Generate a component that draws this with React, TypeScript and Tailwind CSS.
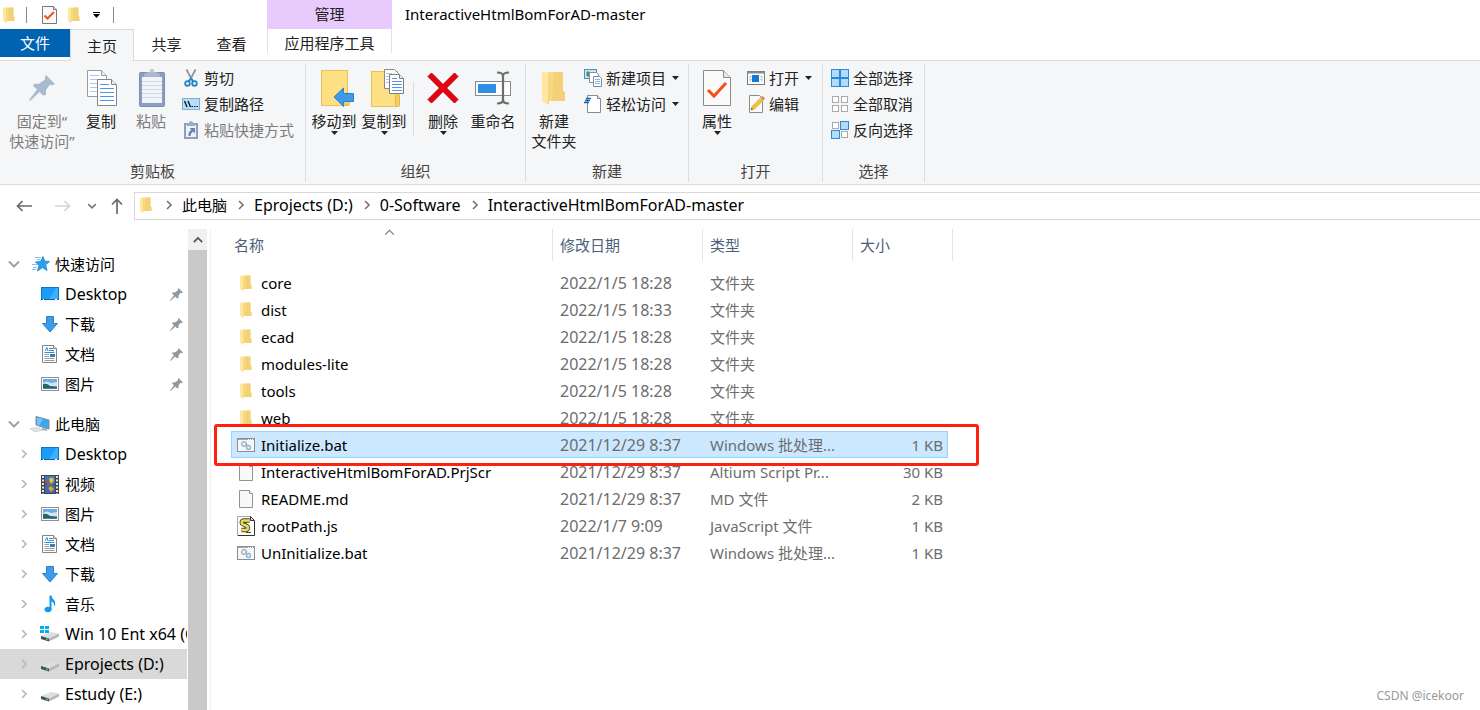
// src/App.tsx
import React, { useState } from 'react';

type IconProps = { className?: string };

/* ---------- icons ---------- */

const FolderIcon: React.FC<IconProps> = ({ className = 'w-3 h-4' }) => (
  <svg viewBox="0 0 24 34" preserveAspectRatio="none" className={className}>
    <path d="M5 1H21V20L23 21V30H6Z" fill="#f8d982" />
    <path d="M12 1H21V20L23 21V30H10Z" fill="#f0cb6c" opacity="0.6" />
    <path d="M0 0.500L7 3V24L6 34L0 30Z" fill="#ffe7a0" />
    <path d="M7 4V25L6 33" fill="none" stroke="#f0cc74" strokeWidth="1" />
  </svg>
);

const PinIcon: React.FC<IconProps> = ({ className = 'w-[26px] h-[26px] text-[#a9b9d0]' }) => (
  <svg viewBox="0 0 26 26" className={className}>
    <path
      d="M17 0L26 9L23 10.500L21 9.500L17 15V20L14 20.500L10.500 17L1 26L0 25L8 14.500L4 11L5.500 8.500L9.500 9L16 4.500V2Z"
      fill="currentColor"
    />
  </svg>
);

const CopyIcon: React.FC = () => (
  <svg viewBox="-2 0 32 36" className="w-8 h-9">
    <path d="M0.500 0.500H14.500L19.500 5.500V26.500H0.500Z" fill="#fff" stroke="#9a9a9a" />
    <path d="M14.500 0.500V5.500H19.500" fill="#eee" stroke="#9a9a9a" />
    <path d="M3 5.500H12M3 9.500H17M3 13.500H17M3 17.500H17M3 21.500H17" stroke="#a6c8f5" />
    <path d="M10.500 9.500H24.500L29.500 14.500V35.500H10.500Z" fill="#fff" stroke="#858585" />
    <path d="M24.500 9.500V14.500H29.500" fill="#eee" stroke="#858585" />
    <path d="M13 14.500H22M13 18.500H27M13 22.500H27M13 26.500H27M13 30.500H27" stroke="#4d94f0" />
  </svg>
);

const PasteIcon: React.FC = () => (
  <svg viewBox="-2 0 28 38" className="w-7 h-[38px]">
    <rect x="0.5" y="3.5" width="25" height="34" rx="1" fill="#8b9dc0" stroke="#7d8fb4" />
    <rect x="3" y="8" width="20" height="26" fill="#f1f5fa" />
    <path d="M3 12.500H23M3 16.500H23M3 20.500H23M3 24.500H23M3 28.500H23" stroke="#cfd9e6" />
    <path d="M5 8V5L9 3H11Q11 0 13 0Q15 0 15 3H17L21 5V8Z" fill="#a9b6cd" />
    <circle cx="13" cy="2.500" r="1" fill="#e5eaf2" />
  </svg>
);

const ScissorsIcon: React.FC = () => (
  <svg viewBox="0 0 14 18" className="w-[14px] h-[18px]">
    <path d="M2.500 0.500L8.500 12M11.500 0.500L5.500 12" stroke="#8f979d" strokeWidth="1.800" />
    <circle cx="3.500" cy="14.500" r="2.300" fill="none" stroke="#1e84c6" strokeWidth="1.800" />
    <circle cx="10.500" cy="14.500" r="2.300" fill="none" stroke="#1e84c6" strokeWidth="1.800" />
    <path d="M4.500 12L7 9.500L9.500 12" fill="none" stroke="#1e84c6" strokeWidth="1.600" />
  </svg>
);

const CopyPathIcon: React.FC = () => (
  <svg viewBox="0 0 18 12" className="w-[18px] h-3">
    <rect x="0.500" y="0.500" width="17" height="11" fill="#b5defa" stroke="#7eaed0" />
    <path d="M2.500 3L5 9M6 3L8.500 9" stroke="#111" strokeWidth="1.300" />
    <path d="M9.500 8.500H11M12 8.500H13.500M14.500 8.500H16" stroke="#111" />
  </svg>
);

const PasteShortcutIcon: React.FC = () => (
  <svg viewBox="0 0 14 18" className="w-[14px] h-[18px]">
    <rect x="1" y="3" width="12" height="14" fill="#eef2f7" stroke="#8d9fbf" strokeWidth="2" />
    <path d="M3 5V3L5 2Q5 0 7 0Q9 0 9 2L11 3V5Z" fill="#9aaac6" />
    <path d="M5.500 7H11V12.500L9 10.500Q6.500 12 6.500 15H4.500Q4 11 7.300 8.800Z" fill="#6c84ad" />
  </svg>
);

const MoveToIcon: React.FC = () => (
  <svg viewBox="-7 0 40 37" className="w-10 h-[37px]">
    <rect x="0.500" y="0.500" width="26" height="35" fill="#fde083" stroke="#e8c353" />
    <path d="M24 35V25Q26 21 28.500 24V35Z" fill="#f5cf64" stroke="#e3ba4a" />
    <path d="M13 27L22.500 18V23.500H32.500V31.500H22.500V36.500Z" fill="#3d9be9" stroke="#2a82cf" />
  </svg>
);

const CopyToIcon: React.FC = () => (
  <svg viewBox="-7 0 40 38" className="w-10 h-[38px]">
    <rect x="0.500" y="2.500" width="26" height="35" fill="#fde083" stroke="#e8c353" />
    <path d="M24.500 37V27Q26.500 23 28.500 26V37Z" fill="#f5cf64" stroke="#e3ba4a" />
    <path d="M13.500 0.500H23.500L27.500 4.500V19.500H13.500Z" fill="#fff" stroke="#8b8b8b" />
    <path d="M15 4.500H21M15 7.500H20M15 10.500H20M15 13.500H20" stroke="#a6c8f5" />
    <path d="M18.500 5.500H28.500L32.500 9.500V24.500H18.500Z" fill="#fff" stroke="#7d7d7d" />
    <path d="M28.500 5.500V9.500H32.500" fill="#eee" stroke="#7d7d7d" />
    <path d="M21 9.500H26M21 12.500H31M21 15.500H31M21 18.500H31M21 21.500H31" stroke="#4d94f0" />
  </svg>
);

const DeleteIcon: React.FC = () => (
  <svg viewBox="0 0 32 32" className="w-8 h-8">
    <path
      d="M4.500 1L16 12.500L27.500 1L31 4.500L19.500 16L31 27.500L27.500 31L16 19.500L4.500 31L1 27.500L12.500 16L1 4.500Z"
      fill="#e60012"
      stroke="#b3000d"
    />
  </svg>
);

const RenameIcon: React.FC = () => (
  <svg viewBox="0 0 36 34" className="w-9 h-[34px]">
    <rect x="0.500" y="10.500" width="35" height="14" fill="#fff" stroke="#8a8a8a" />
    <rect x="3" y="13" width="18" height="9" fill="#2f8fe5" />
    <path
      d="M22 1.500Q28 1.500 28 5V29Q28 32.500 22 32.500M34 1.500Q28 1.500 28 5M28 29Q28 32.500 34 32.500"
      fill="none"
      stroke="#6d6d6d"
      strokeWidth="2.200"
    />
  </svg>
);

const NewItemIcon: React.FC = () => (
  <svg viewBox="0 0 18 18" className="w-[18px] h-[18px]">
    <rect x="0.500" y="0.500" width="12" height="9" fill="#cfe8f8" stroke="#4f8fb5" />
    <rect x="2.500" y="2.500" width="3" height="5" fill="#3f8f7b" />
    <path d="M5.500 3.500H12.500L14.500 5.500V13.500H5.500Z" fill="#fff" stroke="#8e8e8e" />
    <path d="M9.500 7.500H15.500L17.500 9.500V17.500H9.500Z" fill="#fff" stroke="#7d8ea0" />
    <path d="M11 10.500H16M11 12.500H16M11 14.500H16" stroke="#86b7ec" />
  </svg>
);

const EasyAccessIcon: React.FC = () => (
  <svg viewBox="0 0 18 18" className="w-[18px] h-[18px]">
    <path d="M3.500 0.500H13.500L16.500 3.500V17.500H3.500Z" fill="#fff" stroke="#8a8a8a" />
    <path d="M13.500 0.500V3.500H16.500" fill="#eee" stroke="#8a8a8a" />
    <path d="M2 3.500H7M1 5.500H6M0 7.500H5" stroke="#1667b0" strokeWidth="1.400" />
  </svg>
);

const PropertiesIcon: React.FC<IconProps> = ({ className = 'w-7 h-9' }) => (
  <svg viewBox="0 0 28 36" className={className}>
    <path d="M0.500 0.500H20.500L27.500 7.500V35.500H0.500Z" fill="#fafafa" stroke="#8a8a8a" />
    <path d="M20.500 0.500V7.500H27.500" fill="#e6e6e6" stroke="#8a8a8a" />
    <path d="M5 20L11 26L23 13" fill="none" stroke="#f1511b" strokeWidth="3" />
  </svg>
);

// Same sheet with heavier lines, for the title bar
const SmallPropertiesIcon: React.FC = () => (
  <svg viewBox="0 0 15 18" className="w-[15px] h-[18px]">
    <path d="M0.500 0.500H11.500L14.500 3.500V17.500H0.500Z" fill="#fafafa" stroke="#7a7a7a" />
    <path d="M11.500 0.500V3.500H14.500" fill="#e6e6e6" stroke="#7a7a7a" />
    <path d="M2.500 9.500L5.500 12.500L12 6" fill="none" stroke="#f1511b" strokeWidth="2" />
  </svg>
);

const OpenIcon: React.FC = () => (
  <svg viewBox="0 0 18 14" className="w-[18px] h-[14px]">
    <rect x="0.500" y="0.500" width="17" height="13" fill="#fff" stroke="#7b7b7b" />
    <path d="M0 1.500H18" stroke="#8a8a8a" strokeWidth="2" />
    <path d="M3 4.500V11M15 4.500V11M3 5.500H5M13 5.500H15M3 8.500H5M13 8.500H15" stroke="#c3c9cf" />
    <rect x="5" y="4" width="7" height="7" fill="#1078d6" />
  </svg>
);

const EditIcon: React.FC = () => (
  <svg viewBox="0 0 18 18" className="w-[18px] h-[18px]">
    <path d="M2.500 0.500H12.500L15.500 3.500V17.500H2.500Z" fill="#fafafa" stroke="#8a8a8a" />
    <path d="M4 15L5 11.500L14 2.500L16.500 5L7.500 14Z" fill="#f7c13f" stroke="#d59a22" strokeWidth="0.600" />
    <path d="M14 2.500L15.500 1L18 3.500L16.500 5Z" fill="#e9747c" />
    <path d="M4 15L4.600 13L6 14.400Z" fill="#444" />
  </svg>
);

// Four little squares, `on` tells which of them are filled
const SquaresIcon: React.FC<{ on: boolean[] }> = ({ on }) => (
  <svg viewBox="0 0 18 18" className="w-[18px] h-[18px]">
    {on.map((filled, i) => (
      <rect
        key={i}
        x={(i % 2) * 9 + (filled ? 0.5 : 1.5)}
        y={Math.floor(i / 2) * 9 + (filled ? 0.5 : 1.5)}
        width={filled ? 8 : 6}
        height={filled ? 8 : 6}
        fill={filled ? '#b3dcfb' : '#fff'}
        stroke={filled ? '#2b8ad8' : '#a8a8a8'}
      />
    ))}
  </svg>
);

const CaretIcon: React.FC<IconProps> = ({ className = 'w-[7px] h-1' }) => (
  <svg viewBox="0 0 7 4" className={className}>
    <path d="M0 0H7L3.500 4Z" fill="#222" />
  </svg>
);

const ChevronIcon: React.FC<IconProps> = ({ className = '' }) => (
  <svg viewBox="0 0 6 10" className={`w-1.5 h-2.5 ${className}`}>
    <path d="M1 1L5 5L1 9" fill="none" stroke="currentColor" strokeWidth="1.600" />
  </svg>
);

const ChevronDownIcon: React.FC<IconProps & { thin?: boolean }> = ({ className = '', thin }) => (
  <svg viewBox="0 0 12 8" className={className}>
    <path d="M1 1.500L6 6.500L11 1.500" fill="none" stroke="currentColor" strokeWidth={thin ? 1.2 : 2} />
  </svg>
);

const ArrowIcon: React.FC<IconProps> = ({ className = '' }) => (
  <svg viewBox="0 0 16 12" className={`w-4 h-3 ${className}`}>
    <path d="M16 6H1.500M6.500 1L1.500 6L6.500 11" fill="none" stroke="currentColor" strokeWidth="1.700" />
  </svg>
);

const StarIcon: React.FC = () => (
  <svg viewBox="0 0 18 16" className="w-[18px] h-4">
    <path
      d="M11 0.500L12.700 5.200L17.500 5.500L13.700 8.800L15 14.500L10.500 11.500L5.500 15L7 9.500L3.500 6L8.500 5.500Z"
      fill="#2ba0ec"
      stroke="#1580cf"
      strokeWidth="0.800"
    />
    <path d="M3 1.500H9M5 3.500H8M0 8.500H5M1 11.500H5M0 13.500H4" stroke="#7cc3f3" />
  </svg>
);

const DesktopIcon: React.FC = () => (
  <svg viewBox="0 0 18 14" className="w-[18px] h-[14px]">
    <rect x="0.500" y="0.500" width="17" height="12" fill="#1a9cf7" stroke="#0b76c5" />
    <path d="M8 12L15 1H17V12Z" fill="#3eb0fc" />
    <path d="M0 12.500H18" stroke="#0b65ab" />
    <path d="M2 12.500H3M14 12.500H16" stroke="#fff" />
  </svg>
);

const DownloadIcon: React.FC = () => (
  <svg viewBox="0 0 18 17" className="w-[18px] h-[17px]">
    <path d="M5.500 0.500H12.500V7.500H16.500L9 16L1.500 7.500H5.500Z" fill="#3e9bea" stroke="#2f7fc9" />
  </svg>
);

const DocumentIcon: React.FC = () => (
  <svg viewBox="0 0 16 18" className="w-4 h-[18px]">
    <path d="M0.500 0.500H11.500L14.500 3.500V17.500H0.500Z" fill="#fff" stroke="#858585" />
    <path d="M11.500 0.500V3.500H14.500" fill="#eee" stroke="#858585" />
    <path d="M3 6L5 2.500L6 6M7 3.500H11M7 5.500H12M2.500 7.500H12.500" fill="none" stroke="#2a8fdd" />
    <path d="M2.500 9.500H7M2.500 11.500H7M2.500 13.500H12.500M2.500 15.500H12.500" stroke="#9a9a9a" />
    <rect x="8" y="9" width="5" height="3" fill="#3b7fb5" />
  </svg>
);

const PictureIcon: React.FC = () => (
  <svg viewBox="0 0 18 14" className="w-[18px] h-[14px]">
    <rect x="0.500" y="0.500" width="17" height="13" fill="#fff" stroke="#8f8f8f" />
    <rect x="2" y="2" width="14" height="10" fill="#6cabe4" />
    <path d="M2 6Q6 3 10 6L16 5V9H2Z" fill="#cfe4f5" />
    <path d="M2 7Q6 6 9 9L16 10V11H2Z" fill="#2f6258" />
    <path d="M2 11H16V12H2Z" fill="#3d83ae" />
  </svg>
);

const PcIcon: React.FC = () => (
  <svg viewBox="0 0 20 17" className="w-5 h-[17px]">
    <path d="M6 0.500L19 4V13L6 9Z" fill="#3aa7ee" stroke="#7b8b99" />
    <path d="M7 1.500L13 3L9 9.500L7 9Z" fill="#74c5f7" />
    <path d="M12 11V14L17 15V12.500Z" fill="#a7aeb5" />
    <path d="M0 12.500L8 11.500L13 14L5 16Z" fill="#dfe4e8" stroke="#b9c0c6" strokeWidth="0.600" />
  </svg>
);

const VideoIcon: React.FC = () => (
  <svg viewBox="0 0 18 19" className="w-[18px] h-[19px]">
    <rect width="18" height="19" fill="#444" />
    <path d="M2 1V19M16 1V19" stroke="#e5e5e5" strokeWidth="2" strokeDasharray="2 1.500" />
    <rect x="4" y="1" width="10" height="8" fill="#3f74d0" />
    <rect x="4" y="10" width="10" height="8" fill="#3a69bd" />
    <path d="M8 4L11 2L13 5L11 8H9Z" fill="#e9c32c" />
    <path d="M4 7L8 6L10 9H4Z" fill="#c5432f" />
    <path d="M6 8.500H12V10H6Z" fill="#3f9a45" />
    <path d="M7 13L10 11L13 14L10 17Z" fill="#d9a62b" />
  </svg>
);

const MusicIcon: React.FC = () => (
  <svg viewBox="0 0 12 18" className="w-3 h-[18px]">
    <ellipse cx="4" cy="14.500" rx="3.500" ry="2.800" fill="#1497f0" />
    <path d="M5.500 0.500H7.500Q7.500 3 10 5Q12.500 8 10 12Q10.500 7.500 7.500 6.500V14.500H5.500Z" fill="#1497f0" />
  </svg>
);

const DriveIcon: React.FC<{ system?: boolean }> = ({ system }) => (
  <svg viewBox="0 0 20 18" className="w-5 h-[18px]">
    <path d="M1 11L11 7L19 8.500L9 13.500Z" fill="#dcdee1" />
    <path d="M9 13.500L19 8.500V11.500L9 16.500Z" fill="#b3b6ba" />
    <path d="M1 11L9 13.500V16.500L1 14Z" fill="#4a4d51" />
    <path d="M6 14L8 14.700" stroke="#3fd35b" strokeWidth="1.400" />
    {system && <path d="M0 1H4V4H0ZM5 1H9V4H5ZM0 5H4V8H0ZM5 5H9V8H5Z" fill="#00adef" />}
  </svg>
);

const BatIcon: React.FC = () => (
  <svg viewBox="0 0 18 14" className="w-[18px] h-[14px]">
    <rect x="0.500" y="0.500" width="17" height="13" fill="#f5f7f8" stroke="#8b8f92" />
    <path d="M1 1.500H17" stroke="#a3a8ab" />
    <path d="M11 1.500H12M13 1.500H14M15 1.500H16" stroke="#fff" />
    <circle cx="7" cy="6" r="2.300" fill="none" stroke="#90979c" strokeWidth="1.600" strokeDasharray="1.200 0.500" />
    <circle cx="11.500" cy="9.500" r="2" fill="#e3f1fb" stroke="#8fb4d1" strokeWidth="1.300" />
  </svg>
);

const FileIcon: React.FC = () => (
  <svg viewBox="0 0 16 18" className="w-4 h-[18px]">
    <path d="M1.500 0.500H11.500L14.500 3.500V17.500H1.500Z" fill="#f7f8f9" stroke="#939393" />
    <path d="M11.500 0.500V3.500H14.500" fill="#fff" stroke="#939393" />
  </svg>
);

const ScriptIcon: React.FC = () => (
  <svg viewBox="0 0 18 20" className="w-[18px] h-5">
    <path d="M0.500 0.500H13.500L17.500 4.500V19.500H0.500Z" fill="#fff" stroke="#a5a5a5" />
    <path d="M17.500 5V19.500H1" fill="none" stroke="#333" />
    <path d="M13.500 0.500V4.500H17.500Z" fill="#ddd" stroke="#333" />
    <path
      d="M12.500 4.500H6.500Q4 5 5 7.500L10.500 10.500Q12 12.500 9.500 14H4.500"
      fill="none"
      stroke="#4b4718"
      strokeWidth="4.400"
    />
    <path
      d="M12.500 4.500H6.500Q4 5 5 7.500L10.500 10.500Q12 12.500 9.500 14H4.500"
      fill="none"
      stroke="#e9dc62"
      strokeWidth="2.600"
    />
    <path d="M9 16.500H14M6 7H10" stroke="#4b4718" />
  </svg>
);

/* ---------- data ---------- */

const FOLDER = '文件夹';

const files = [
  { name: 'core', date: '2022/1/5 18:28', type: FOLDER, size: '', icon: <FolderIcon /> },
  { name: 'dist', date: '2022/1/5 18:33', type: FOLDER, size: '', icon: <FolderIcon /> },
  { name: 'ecad', date: '2022/1/5 18:28', type: FOLDER, size: '', icon: <FolderIcon /> },
  { name: 'modules-lite', date: '2022/1/5 18:28', type: FOLDER, size: '', icon: <FolderIcon /> },
  { name: 'tools', date: '2022/1/5 18:28', type: FOLDER, size: '', icon: <FolderIcon /> },
  { name: 'web', date: '2022/1/5 18:28', type: FOLDER, size: '', icon: <FolderIcon /> },
  { name: 'Initialize.bat', date: '2021/12/29 8:37', type: 'Windows 批处理...', size: '1 KB', icon: <BatIcon /> },
  { name: 'InteractiveHtmlBomForAD.PrjScr', date: '2021/12/29 8:37', type: 'Altium Script Pr...', size: '30 KB', icon: <FileIcon /> },
  { name: 'README.md', date: '2021/12/29 8:37', type: 'MD 文件', size: '2 KB', icon: <FileIcon /> },
  { name: 'rootPath.js', date: '2022/1/7 9:09', type: 'JavaScript 文件', size: '1 KB', icon: <ScriptIcon /> },
  { name: 'UnInitialize.bat', date: '2021/12/29 8:37', type: 'Windows 批处理...', size: '1 KB', icon: <BatIcon /> },
];

const quickAccess = [
  { name: 'Desktop', icon: <DesktopIcon />, latin: true },
  { name: '下载', icon: <DownloadIcon /> },
  { name: '文档', icon: <DocumentIcon /> },
  { name: '图片', icon: <PictureIcon /> },
];

const thisPc = [
  { name: 'Desktop', icon: <DesktopIcon />, latin: true },
  { name: '视频', icon: <VideoIcon /> },
  { name: '图片', icon: <PictureIcon /> },
  { name: '文档', icon: <DocumentIcon /> },
  { name: '下载', icon: <DownloadIcon /> },
  { name: '音乐', icon: <MusicIcon /> },
  { name: 'Win 10 Ent x64 (C:)', icon: <DriveIcon system />, latin: true },
  { name: 'Eprojects (D:)', icon: <DriveIcon />, latin: true },
  { name: 'Estudy (E:)', icon: <DriveIcon />, latin: true },
];

const crumbs = [
  { name: '此电脑', latin: false },
  { name: 'Eprojects (D:)', latin: true },
  { name: '0-Software', latin: true },
  { name: 'InteractiveHtmlBomForAD-master', latin: true },
];

/* ---------- ribbon ---------- */

const RibbonGroup: React.FC<{
  label: string;
  className: string;
  inset?: boolean;
  children: React.ReactNode;
}> = ({ label, className, inset, children }) => (
  <section className={`flex shrink-0 flex-col justify-between border-r border-[#dcdddf] ${className}`}>
    <div className={`flex ${inset ? 'pl-2' : 'pl-[3px]'}`}>{children}</div>
    <h2 className="pb-px text-center leading-5 text-[#444]">{label}</h2>
  </section>
);

const BigButton: React.FC<{
  icon: React.ReactNode;
  label: string;
  second?: string;
  caret?: boolean;
  wide?: boolean;
  disabled?: boolean;
}> = ({ icon, label, second, caret, wide, disabled }) => (
  <button
    disabled={disabled}
    className={`flex shrink-0 flex-col items-center pt-1.5 leading-5 whitespace-nowrap disabled:text-[#7c7c7c] ${
      wide ? 'w-[68px]' : 'w-[50px]'
    }`}
  >
    <span className="mb-[5px] flex h-9 items-center justify-center">{icon}</span>
    <span>{label}</span>
    {second && <span>{second}</span>}
    {caret && <CaretIcon />}
  </button>
);

const SmallButton: React.FC<{
  icon: React.ReactNode;
  label: string;
  caret?: boolean;
  disabled?: boolean;
}> = ({ icon, label, caret, disabled }) => (
  <button disabled={disabled} className="flex h-[26px] items-center whitespace-nowrap disabled:text-[#7c7c7c]">
    <span className="mr-1 flex w-[18px] justify-center">{icon}</span>
    {label}
    {caret && <CaretIcon className="ml-1.5 h-1 w-[7px]" />}
  </button>
);

const Ribbon: React.FC = () => (
  <div className="flex h-[124px] border-b border-[#d9dadc] bg-[#f5f6f7] pt-[3px] pb-0.5">
    <RibbonGroup label="剪贴板" className="w-[306px]" inset>
      <BigButton icon={<PinIcon />} label="固定到“" second="快速访问”" wide disabled />
      <BigButton icon={<CopyIcon />} label="复制" />
      <BigButton icon={<PasteIcon />} label="粘贴" disabled />
      <div className="ml-1.5 flex flex-col pt-px">
        <SmallButton icon={<ScissorsIcon />} label="剪切" />
        <SmallButton icon={<CopyPathIcon />} label="复制路径" />
        <SmallButton icon={<PasteShortcutIcon />} label="粘贴快捷方式" disabled />
      </div>
    </RibbonGroup>
    <RibbonGroup label="组织" className="w-[220px]">
      <BigButton icon={<MoveToIcon />} label="移动到" caret />
      <BigButton icon={<CopyToIcon />} label="复制到" caret />
      <div className="mx-1 mt-[18px] h-[54px] w-px bg-[#dcdddf]" />
      <BigButton icon={<DeleteIcon />} label="删除" caret />
      <BigButton icon={<RenameIcon />} label="重命名" />
    </RibbonGroup>
    <RibbonGroup label="新建" className="w-[163px]">
      <BigButton icon={<FolderIcon className="h-[34px] w-6" />} label="新建" second="文件夹" />
      <div className="ml-[5px] flex flex-col pt-px">
        <SmallButton icon={<NewItemIcon />} label="新建项目" caret />
        <SmallButton icon={<EasyAccessIcon />} label="轻松访问" caret />
      </div>
    </RibbonGroup>
    <RibbonGroup label="打开" className="w-[134px]">
      <BigButton icon={<PropertiesIcon />} label="属性" caret />
      <div className="ml-[5px] flex flex-col pt-px">
        <SmallButton icon={<OpenIcon />} label="打开" caret />
        <SmallButton icon={<EditIcon />} label="编辑" />
      </div>
    </RibbonGroup>
    <RibbonGroup label="选择" className="w-[102px]" inset>
      <div className="flex flex-col pt-px">
        <SmallButton icon={<SquaresIcon on={[true, true, true, true]} />} label="全部选择" />
        <SmallButton icon={<SquaresIcon on={[false, false, false, false]} />} label="全部取消" />
        <SmallButton icon={<SquaresIcon on={[false, true, true, false]} />} label="反向选择" />
      </div>
    </RibbonGroup>
  </div>
);

/* ---------- navigation tree ---------- */

const TreeRoot: React.FC<{ icon: React.ReactNode; name: string }> = ({ icon, name }) => (
  <a href="#" className="flex h-[30px] items-center pl-2">
    <ChevronDownIcon className="h-2 w-3 text-[#a0a0a0]" />
    <span className="mr-1 flex w-[31px] justify-end pr-px">{icon}</span>
    {name}
  </a>
);

const TreeItem: React.FC<{
  icon: React.ReactNode;
  name: string;
  latin?: boolean;
  pinned?: boolean;
  selected?: boolean;
}> = ({ icon, name, latin, pinned, selected }) => (
  <a
    href="#"
    className={`flex h-[30px] items-center pr-1 whitespace-nowrap ${selected ? 'bg-[#d9d9d9]' : ''} ${
      pinned ? 'pl-10' : 'pl-[21px]'
    } ${latin ? 'text-base' : ''}`}
  >
    {!pinned && <ChevronIcon className="mr-[13px] shrink-0 text-[#b8b8b8]" />}
    <span className="mr-[5px] flex w-5 shrink-0 justify-center">{icon}</span>
    {name}
    {pinned && <PinIcon className="ml-auto h-[13px] w-[13px] text-[#8c99a3]" />}
  </a>
);

/* ---------- page ---------- */

const App: React.FC = () => {
  const [selectedFile, setSelectedFile] = useState<string>('Initialize.bat');

  return (
    <div className="relative flex min-h-screen flex-col overflow-hidden bg-white font-['Noto_Sans','Noto_Sans_CJK_SC',sans-serif] text-[15px] leading-5 text-[#222]">
      {/* title bar and tabs */}
      <header className="flex h-[61px] border-b border-[#d9dadc]">
        <div className="flex w-[267px] shrink-0 flex-col">
          <div className="flex h-[29px] shrink-0 items-center pl-[3px]">
            <FolderIcon />
            <div className="mx-[11px] h-4 w-px bg-[#8a8a8a]" />
            <button aria-label="属性" className="ml-1">
              <SmallPropertiesIcon />
            </button>
            <button aria-label="新建文件夹" className="ml-[11px]">
              <FolderIcon />
            </button>
            <button aria-label="自定义" className="ml-[13px]">
              <svg viewBox="0 0 7 6" className="h-1.5 w-[7px]">
                <path d="M0 0H7V1H0ZM0 2H7L3.500 6Z" fill="#000" />
              </svg>
            </button>
            <div className="ml-[13px] h-4 w-px bg-[#8a8a8a]" />
          </div>
          <nav className="flex h-8 shrink-0 items-start">
            <button className="h-7 w-[70px] bg-[#0063b1] text-white">文件</button>
            <button className="h-8 w-16 border border-b-0 border-[#d9dadc] bg-[#f5f6f7]">主页</button>
            <button className="h-[30px] w-[65px]">共享</button>
            <button className="h-[30px] w-[65px]">查看</button>
          </nav>
        </div>
        <div className="flex w-[125px] shrink-0 flex-col">
          <div className="flex h-[29px] items-center justify-center bg-[#e9cafc] pb-0.5">管理</div>
          <button className="h-6 border-x border-[#e2e2e2] pt-1">应用程序工具</button>
        </div>
        <h1 className="flex h-[29px] items-center pb-0.5 pl-[13px] text-black">InteractiveHtmlBomForAD-master</h1>
      </header>

      <Ribbon />

      {/* address bar */}
      <div className="mb-0.5 flex h-[42px] items-center">
        <div className="flex w-[134px] shrink-0 items-center pl-4">
          <button aria-label="后退">
            <ArrowIcon className="text-[#6a6a6a]" />
          </button>
          <button aria-label="前进" className="ml-[23px]">
            <ArrowIcon className="rotate-180 text-[#d5d5d5]" />
          </button>
          <button aria-label="最近浏览的位置" className="ml-4">
            <ChevronDownIcon className="h-1.5 w-[10px] text-[#777]" />
          </button>
          <button aria-label="上移" className="ml-3">
            <ArrowIcon className="rotate-90 text-[#6a6a6a]" />
          </button>
        </div>
        <nav className="flex h-7 flex-1 items-center border border-r-0 border-[#d9d9d9] pb-0.5 pl-[5px] text-black">
          <FolderIcon />
          <span className="w-[3px]" />
          {crumbs.map((crumb) => (
            <React.Fragment key={crumb.name}>
              <ChevronIcon className="mr-[10px] ml-[11px] text-[#777]" />
              <a href="#" className={`whitespace-nowrap ${crumb.latin ? 'text-base leading-5' : ''}`}>
                {crumb.name}
              </a>
            </React.Fragment>
          ))}
        </nav>
      </div>

      <div className="flex flex-1">
        {/* tree */}
        <aside className="flex w-[211px] shrink-0 border-r border-[#f0f0f0] text-black">
          <nav className="w-[187px] shrink-0 overflow-hidden pt-5">
            <TreeRoot icon={<StarIcon />} name="快速访问" />
            {quickAccess.map((item) => (
              <TreeItem key={item.name} {...item} pinned />
            ))}
            <div className="h-[10px]" />
            <TreeRoot icon={<PcIcon />} name="此电脑" />
            {thisPc.map((item) => (
              <TreeItem key={item.name} {...item} selected={item.name === 'Eprojects (D:)'} />
            ))}
          </nav>
          <div className="ml-px flex w-[19px] flex-col bg-[#c9c9c9]">
            <button aria-label="向上滚动" className="flex h-[21px] items-center justify-center bg-[#f0f0f0]">
              <ChevronDownIcon className="h-2 w-[10px] rotate-180 text-[#505050]" />
            </button>
          </div>
        </aside>

        {/* file list */}
        <main className="flex-1 pl-5">
          <div className="relative w-[722px]">
            <table className="w-full table-fixed border-separate border-spacing-0 text-[#6d6d6d]">
              <colgroup>
                <col className="w-[322px]" />
                <col className="w-[150px]" />
                <col className="w-[150px]" />
                <col className="w-[95px]" />
                <col className="w-[5px]" />
              </colgroup>
              <thead>
                <tr className="h-8 text-left text-[#4c607a]">
                  <th className="relative border-r border-[#e5e5e5] pl-[3px] font-normal">
                    名称
                    <ChevronDownIcon thin className="absolute top-0 left-[153px] h-[7px] w-[11px] rotate-180 text-[#777]" />
                  </th>
                  <th className="border-r border-[#e5e5e5] pl-[7px] font-normal">修改日期</th>
                  <th className="border-r border-[#e5e5e5] pl-[7px] font-normal">类型</th>
                  <th colSpan={2} className="border-r border-[#e5e5e5] pl-[7px] font-normal">
                    大小
                  </th>
                </tr>
              </thead>
              <tbody>
                <tr className="h-2">
                  <td colSpan={5} />
                </tr>
                {files.map((file) => {
                  const cell =
                    file.name === selectedFile ? 'border-y border-[#99d1ff] bg-[#cce8ff]' : 'border-y border-transparent';
                  return (
                    <tr key={file.name} className="h-[27px]" onClick={() => setSelectedFile(file.name)}>
                      <td className={`border-l pl-1 ${cell}`}>
                        <span className="flex items-center text-black">
                          <span className="mr-[5px] flex h-5 w-5 items-center justify-center">{file.icon}</span>
                          {file.name}
                        </span>
                      </td>
                      <td className={`pl-[7px] text-base leading-5 ${cell}`}>{file.date}</td>
                      <td className={`pl-[7px] whitespace-nowrap ${cell}`}>{file.type}</td>
                      <td className={`border-r pr-1 text-right ${cell}`}>{file.size}</td>
                      <td />
                    </tr>
                  );
                })}
              </tbody>
            </table>
            {/* highlight frame around the script to run */}
            <div className="pointer-events-none absolute top-[195px] -right-[26px] -left-[17px] h-[42px] rounded-[3px] border-3 border-[#ff2010]" />
          </div>
        </main>
      </div>

      <p className="absolute right-4 bottom-1 text-xs leading-5 text-[#999]">CSDN @icekoor</p>
    </div>
  );
};

export default App;
